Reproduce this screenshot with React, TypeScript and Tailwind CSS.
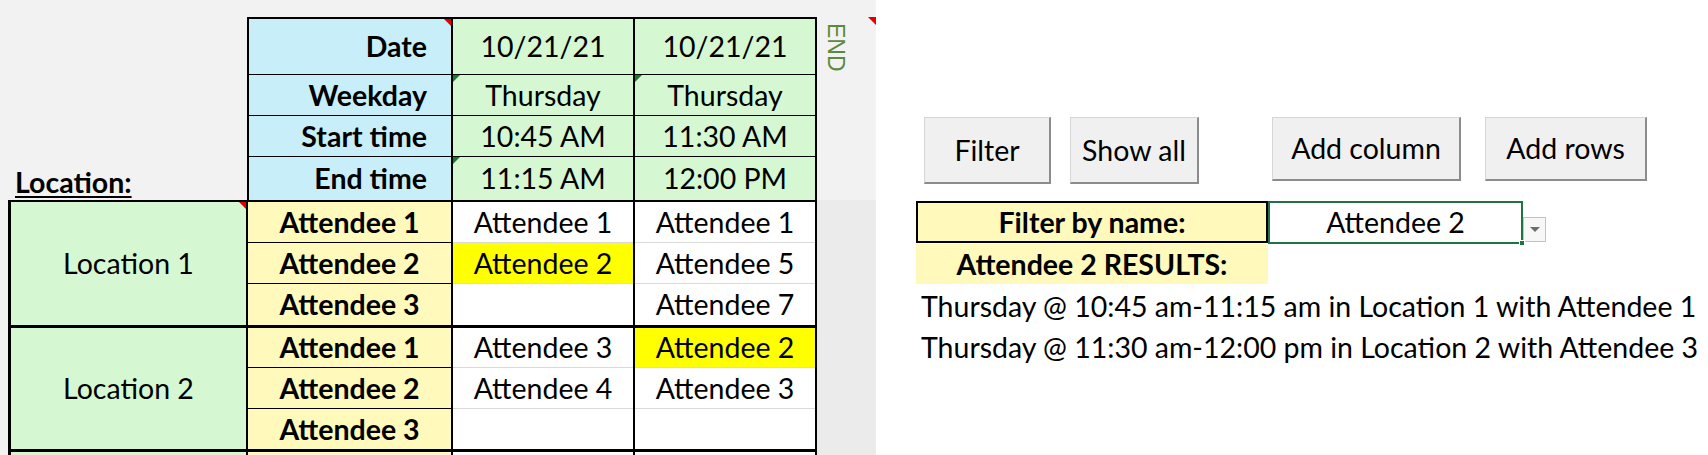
import React from 'react';

const FONT = "font-['Lato','Liberation_Sans',sans-serif]";

const headRows = [
  { label: 'Date', a: '10/21/21', b: '10/21/21', h: 'h-[56px]', border: 'border-b', ta: false, tb: false, red: true },
  { label: 'Weekday', a: 'Thursday', b: 'Thursday', h: 'h-[41px]', border: 'border-b', ta: true, tb: true, red: false },
  { label: 'Start time', a: '10:45 AM', b: '11:30 AM', h: 'h-[41px]', border: 'border-b', ta: false, tb: false, red: false },
  { label: 'End time', a: '11:15 AM', b: '12:00 PM', h: 'h-[43px]', border: '', ta: true, tb: false, red: false },
];

const groups = [
  {
    loc: 'Location 1',
    red: true,
    rows: [
      { a: 'Attendee 1', b: 'Attendee 1', ha: false, hb: false, h: 'h-[41px]' },
      { a: 'Attendee 2', b: 'Attendee 5', ha: true, hb: false, h: 'h-[41px]' },
      { a: '', b: 'Attendee 7', ha: false, hb: false, h: 'h-[41px]' },
    ],
  },
  {
    loc: 'Location 2',
    red: false,
    rows: [
      { a: 'Attendee 3', b: 'Attendee 2', ha: false, hb: true, h: 'h-[40px]' },
      { a: 'Attendee 4', b: 'Attendee 3', ha: false, hb: false, h: 'h-[41px]' },
      { a: '', b: '', ha: false, hb: false, h: 'h-[40px]' },
    ],
  },
];

function GreenTick() {
  return <span className="absolute left-0 top-0 w-0 h-0 border-t-[7px] border-r-[7px] border-t-[#1f7a2e] border-r-transparent" />;
}

function RedTick() {
  return <span className="absolute right-0 top-0 w-0 h-0 border-t-[7px] border-l-[7px] border-t-[#e00000] border-l-transparent" />;
}

function SheetButton({ label, w, h }: { label: string; w: string; h: string }) {
  return (
    <div
      className={`${w} ${h} flex items-center justify-center bg-[#f0f0f0] border-t border-l border-[#d6d6d6] border-r-2 border-b-2 border-r-[#8c8c8c] border-b-[#8c8c8c] text-[28.5px] text-black`}
    >
      {label}
    </div>
  );
}

export default function App() {
  return (
    <div className={`${FONT} flex w-[1708px] h-[455px] overflow-hidden text-black text-[28.5px]`}>
      {/* sheet area */}
      <div className="relative w-[876px] h-[455px] bg-[#f2f2f2] pt-[17px] pl-[8px] flex flex-col">
        <span className="absolute right-0 top-[17px] w-0 h-0 border-t-[8px] border-l-[8px] border-t-[#e00000] border-l-transparent" />

        <div className="flex h-[183px]">
          <div className="w-[239px] flex items-end pl-[7px] pb-[4px]">
            <span className="font-bold underline underline-offset-[3px] leading-none">Location:</span>
          </div>
          <div className="w-[570px] border-l-2 border-t-2 border-black flex flex-col">
            {headRows.map((r) => (
              <div key={r.label} className={`flex ${r.h} ${r.border} border-black`}>
                <div className="relative w-[204px] border-r-2 border-black bg-[#c8eff9] flex items-center justify-end pr-[24px] font-bold">
                  {r.label}
                  {r.red && <RedTick />}
                </div>
                <div className="relative w-[182px] border-r-2 border-black bg-[#d5f7d2] flex items-center justify-center">
                  {r.a}
                  {r.ta && <GreenTick />}
                </div>
                <div className="relative w-[182px] border-r-2 border-black bg-[#d5f7d2] flex items-center justify-center">
                  {r.b}
                  {r.tb && <GreenTick />}
                </div>
              </div>
            ))}
          </div>
          <div className="flex-1 pl-[9px] pt-[6px]">
            <span className="block [writing-mode:vertical-rl] font-['Liberation_Sans',sans-serif] text-[23px] leading-[20px] text-[#5a8a3c]">END</span>
          </div>
        </div>

        <div className="flex flex-1">
          <div className="w-[809px] border-l-[3px] border-t-2 border-black flex flex-col">
            {groups.map((g) => (
              <div key={g.loc} className="flex border-b-[3px] border-black">
                <div className="relative w-[237px] border-r-2 border-black bg-[#d5f7d2] flex items-center justify-center">
                  {g.loc}
                  {g.red && <RedTick />}
                </div>
                <div className="w-[205px] border-r-2 border-black bg-[#fff9bb] flex flex-col">
                  {g.rows.map((r, i) => (
                    <div
                      key={i}
                      className={`${r.h} flex items-center justify-center font-bold ${i < 2 ? 'border-b border-black' : ''}`}
                    >
                      Attendee {i + 1}
                    </div>
                  ))}
                </div>
                <div className="w-[182px] border-r-2 border-black bg-white flex flex-col">
                  {g.rows.map((r, i) => (
                    <div
                      key={i}
                      className={`${r.h} flex items-center justify-center ${r.ha ? 'bg-[#ffff00]' : ''} ${i < 2 ? 'border-b border-[#d9d9d9]' : ''}`}
                    >
                      {r.a}
                    </div>
                  ))}
                </div>
                <div className="w-[182px] border-r-2 border-black bg-white flex flex-col">
                  {g.rows.map((r, i) => (
                    <div
                      key={i}
                      className={`${r.h} flex items-center justify-center ${r.hb ? 'bg-[#ffff00]' : ''} ${i < 2 ? 'border-b border-[#d9d9d9]' : ''}`}
                    >
                      {r.b}
                    </div>
                  ))}
                </div>
              </div>
            ))}
            <div className="flex h-[10px]">
              <div className="w-[237px] border-r-2 border-black bg-[#d5f7d2]" />
              <div className="w-[205px] border-r-2 border-black bg-[#fff9bb]" />
              <div className="w-[182px] border-r-2 border-black bg-white" />
              <div className="w-[182px] border-r-2 border-black bg-white" />
            </div>
          </div>
          <div className="flex-1 bg-[#ebebeb]" />
        </div>
      </div>

      {/* controls */}
      <div className="flex-1 bg-white pt-[117px] flex flex-col">
        <div className="flex items-start pl-[48px]">
          <SheetButton label="Filter" w="w-[127px]" h="h-[67px]" />
          <div className="ml-[19px]">
            <SheetButton label="Show all" w="w-[129px]" h="h-[67px]" />
          </div>
          <div className="ml-[73px]">
            <SheetButton label="Add column" w="w-[189px]" h="h-[64px]" />
          </div>
          <div className="ml-[24px]">
            <SheetButton label="Add rows" w="w-[162px]" h="h-[64px]" />
          </div>
        </div>

        <div className="flex items-start pl-[40px] mt-[17px]">
          <div className="w-[352px] h-[42px] border-2 border-black bg-[#fff9bb] flex items-center justify-center font-bold">
            Filter by name:
          </div>
          <div className="relative w-[255px] h-[43px] border-2 border-[#217346] flex items-center justify-center">
            Attendee 2
            <span className="absolute -right-[4px] -bottom-[4px] w-[6px] h-[6px] bg-[#217346] border border-white" />
          </div>
          <div className="mt-[16px] w-[23px] h-[25px] border border-[#c2c2c2] bg-[#f7f7f7] flex items-center justify-center">
            <span className="w-0 h-0 border-l-[5px] border-r-[5px] border-t-[5px] border-l-transparent border-r-transparent border-t-[#6e6e6e]" />
          </div>
        </div>

        <div className="ml-[40px] w-[352px] h-[40px] bg-[#fff9bb] flex items-center justify-center font-bold">
          Attendee 2 RESULTS:
        </div>

        <div className="pl-[45px] mt-[2px] whitespace-nowrap">
          <div className="h-[41px] flex items-center">Thursday @ 10:45 am-11:15 am in Location 1 with Attendee 1</div>
          <div className="h-[41px] flex items-center">Thursday @ 11:30 am-12:00 pm in Location 2 with Attendee 3</div>
        </div>
      </div>
    </div>
  );
}
